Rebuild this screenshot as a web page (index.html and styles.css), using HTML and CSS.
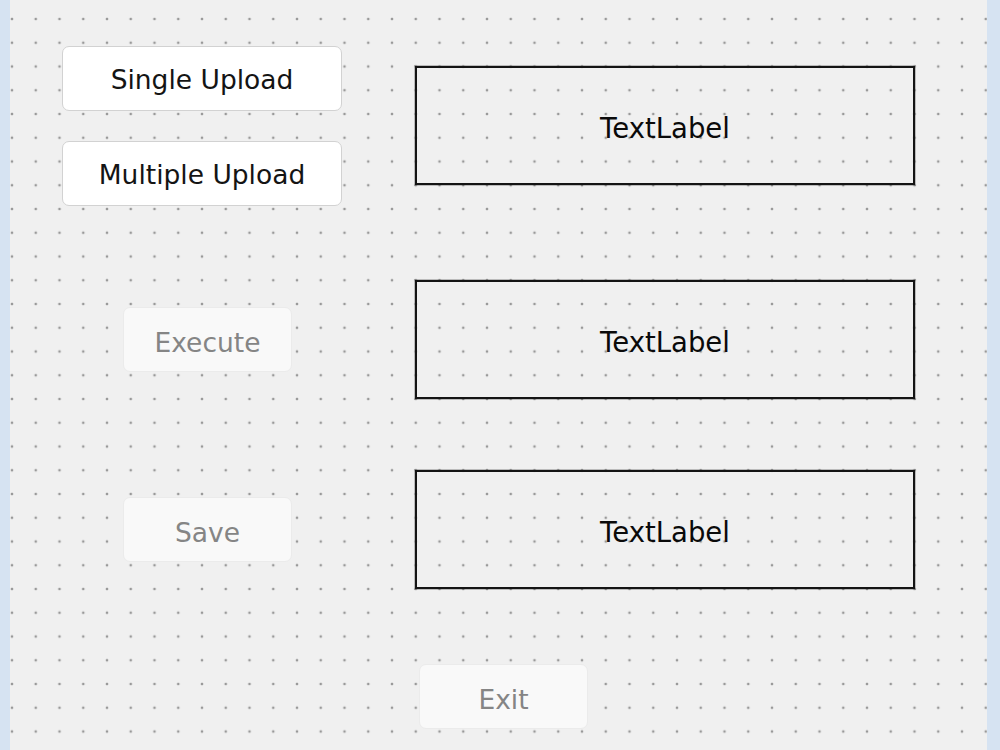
FILE: index.html
```html
<!DOCTYPE html>
<html>
<head>
<meta charset="utf-8">
<link rel="stylesheet" href="styles.css">
</head>
<body>
<div class="window">
  <div class="edge edge-left"></div>
  <div class="canvas">
    <div class="columns">
      <div class="col-left">
        <button class="btn btn-upload">Single Upload</button>
        <button class="btn btn-upload btn-second">Multiple Upload</button>
        <button class="btn btn-disabled btn-execute">Execute</button>
        <button class="btn btn-disabled btn-save">Save</button>
      </div>
      <div class="col-right">
        <div class="label label-1">TextLabel</div>
        <div class="label label-2">TextLabel</div>
        <div class="label label-3">TextLabel</div>
      </div>
    </div>
    <button class="btn btn-disabled btn-exit">Exit</button>
  </div>
  <div class="edge edge-right"></div>
</div>
</body>
</html>
```

FILE: styles.css
```css
html, body {
  margin: 0;
  padding: 0;
}
body {
  width: 1000px;
  height: 750px;
  overflow: hidden;
  font-family: "DejaVu Sans", Verdana, sans-serif;
}
.window {
  display: flex;
  width: 1000px;
  height: 750px;
}
.edge {
  background: #d6e3f2;
  flex: none;
}
.edge-left { width: 10px; }
.edge-right { width: 13px; }
.canvas {
  flex: 1;
  display: flex;
  flex-direction: column;
  background-color: #f0f0f0;
  background-image: radial-gradient(circle, #999999 1px, rgba(153,153,153,0) 1.7px);
  background-size: 23.75px 23.75px;
  background-position: 13.875px 7.125px;
}
.columns {
  display: flex;
  align-items: flex-start;
}
.col-left {
  display: flex;
  flex-direction: column;
  align-items: flex-start;
  margin-left: 52px;
  padding-top: 46px;
  width: 280px;
}
.col-right {
  display: flex;
  flex-direction: column;
  margin-left: 73px;
  padding-top: 66px;
}
.btn {
  font-family: inherit;
  box-sizing: border-box;
  height: 65px;
  border-radius: 7px;
  font-size: 26.5px;
  padding: 2px 0 0 0;
  margin: 0;
  display: flex;
  align-items: center;
  justify-content: center;
}
.btn-upload {
  width: 280px;
  background: #ffffff;
  border: 1.5px solid #d2d2d2;
  color: #141414;
}
.btn-second { margin-top: 30px; }
.btn-disabled {
  width: 169px;
  padding-top: 6px;
  background: #f9f9f9;
  border: 1px solid #ebebeb;
  color: #858585;
}
.btn-execute { margin-top: 101px; margin-left: 61px; }
.btn-save { margin-top: 125px; margin-left: 61px; }
.btn-exit { margin-top: 75px; margin-left: 409px; }
.label {
  box-sizing: border-box;
  width: 500px;
  height: 119px;
  border: 2px solid #141414;
  box-shadow: 0 0 0 1px rgba(0,0,0,0.22);
  display: flex;
  align-items: center;
  justify-content: center;
  font-size: 27.5px;
  padding-top: 4px;
  color: #0a0a0a;
}
.label-2 { margin-top: 95px; }
.label-3 { margin-top: 71px; }
```
